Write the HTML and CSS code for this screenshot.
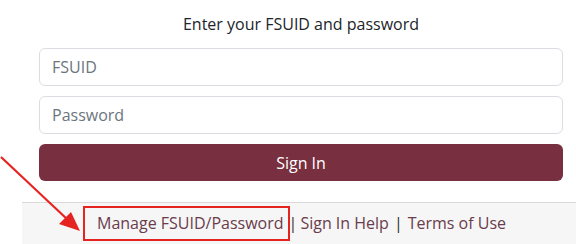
FILE: index.html
```html
<!DOCTYPE html>
<html>
<head>
<meta charset="utf-8">
<link rel="stylesheet" href="styles.css">
</head>
<body>
<div class="page">
  <form class="login">
    <h2 class="title">Enter your FSUID and password</h2>
    <input class="field" type="text" placeholder="FSUID">
    <input class="field" type="password" placeholder="Password">
    <button class="btn" type="button">Sign In</button>
  </form>
  <div class="footer">
    <a class="link highlight" href="#">Manage FSUID/Password</a>
    <span class="sep first">|</span>
    <a class="link" href="#">Sign In Help</a>
    <span class="sep">|</span>
    <a class="link" href="#">Terms of Use</a>
  </div>
  <svg class="arrow" width="100" height="90" viewBox="0 0 100 90">
    <line x1="1" y1="2" x2="68" y2="65" stroke="#e52421" stroke-width="2.2"/>
    <polygon points="80,76 59,69 71,57" fill="#e52421"/>
  </svg>
</div>
</body>
</html>
```
FILE: styles.css
```css
* { box-sizing: border-box; }
html, body { margin: 0; padding: 0; background: #fff; overflow: hidden; }
body { font-family: "Open Sans", "Noto Sans", sans-serif; width: 576px; height: 244px; }
.page { position: relative; width: 576px; height: 244px; }
.login {
  display: flex;
  flex-direction: column;
  margin-left: 39px;
  width: 524px;
  padding-top: 12px;
}
.title {
  margin: 0;
  font-size: 16px;
  font-weight: 400;
  color: #212529;
  text-align: center;
  line-height: 24px;
  height: 24px;
  margin-bottom: 12px;
}
.field {
  height: 38px;
  width: 100%;
  border: 1px solid #dcdde2;
  border-radius: 6px;
  padding: 0 12px;
  font-family: inherit;
  font-size: 16px;
  color: #495057;
  margin-bottom: 10px;
}
.field::placeholder { color: #6c757d; }
.btn {
  margin-top: 0;
  height: 37px;
  width: 100%;
  border: none;
  border-radius: 6px;
  background: #782f40;
  color: #fff;
  font-family: inherit;
  font-size: 16px;
}
.footer {
  margin-top: 21px;
  margin-left: 22px;
  width: 558px;
  height: 45px;
  background: #f6f6f6;
  border-top: 1px solid #d9d9d9;
  display: flex;
  align-items: center;
  padding-left: 61px;
  padding-bottom: 4px;
  font-size: 16px;
}
.link { color: #6a3c4c; text-decoration: none; }
.sep { color: #333; margin: 0 5px; }
.sep.first { margin-left: -1px; margin-right: 3px; }
.highlight {
  border: 2px solid #e52421;
  padding: 3px 4px 4px 12px;
  line-height: 24px;
}
.arrow { position: absolute; left: 0; top: 155px; }
```
